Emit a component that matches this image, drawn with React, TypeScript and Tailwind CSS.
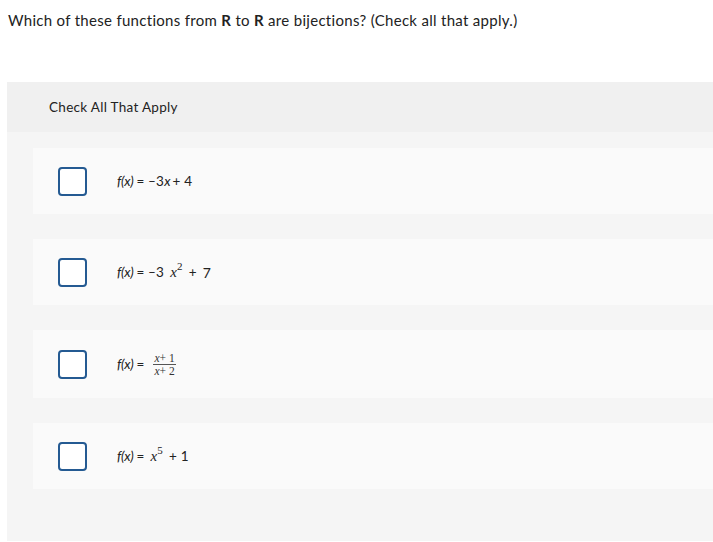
import React from "react";

const sans = { fontFamily: '"Lato", "Open Sans", sans-serif' };

function Box() {
  return <div className="w-[29px] h-[29px] shrink-0 rounded-[4px] border-2 border-[#245a92] bg-white" />;
}

function Fx() {
  return <span className="italic tracking-[-0.3px]">f(x)</span>;
}

function Card({ h, children }: { h: string; children: React.ReactNode }) {
  return (
    <div className={`flex items-center bg-[#fafafa] pl-[25px] ${h}`}>
      <Box />
      <div className="ml-[30px] flex items-center text-[13.5px] tracking-[0.2px] text-[#222]">{children}</div>
    </div>
  );
}

const serif = { fontFamily: '"Liberation Serif", "Times New Roman", serif' };

export default function App() {
  return (
    <div className="bg-white min-h-[542px] w-[713px] overflow-hidden" style={sans}>
      <div className="pl-[8px] pt-[10px] text-[15px] leading-[20px] tracking-[0.3px] text-[#222]">
        Which of these functions from <b>R</b> to <b>R</b> are bijections? (Check all that apply.)
      </div>
      <div className="mt-[52px] ml-[7px] w-[720px] bg-[#f5f5f5] pb-[52px]">
        <div className="flex h-[50px] items-center bg-[#f0f0f0] pl-[42px] text-[13.5px] tracking-[0.3px] text-[#222]">
          Check All That Apply
        </div>
        <div className="flex flex-col gap-[25px] pl-[26px] pt-[16px]">
          <Card h="h-[66px]">
            <Fx />
            <span className="ml-[3px]">= –3</span>
            <span className="italic">x</span>
            <span className="ml-[2px]">+ 4</span>
          </Card>
          <Card h="h-[66px]">
            <Fx />
            <span className="ml-[3px]">= –3</span>
            <span className="ml-[6px] italic text-[15px]" style={serif}>
              x
            </span>
            <sup className="text-[11px] -top-[6px] relative" style={serif}>2</sup>
            <span className="ml-[6px]">+</span>
            <span className="ml-[6px] text-[14px]">7</span>
          </Card>
          <Card h="h-[68px]">
            <Fx />
            <span className="ml-[3px]">=</span>
            <span className="ml-[9px] inline-flex flex-col items-center text-[11.5px] leading-[12px] tracking-normal text-[#333]" style={serif}>
              <span className="block px-[1px]"><i>x</i>+ 1</span>
              <span className="block h-px w-full bg-[#555]" />
              <span className="block px-[1px]"><i>x</i>+ 2</span>
            </span>
          </Card>
          <Card h="h-[66px]">
            <Fx />
            <span className="ml-[3px]">=</span>
            <span className="ml-[6px] italic text-[15px]" style={serif}>
              x
            </span>
            <sup className="text-[11px] -top-[6px] relative" style={serif}>5</sup>
            <span className="ml-[6px]">+ 1</span>
          </Card>
        </div>
      </div>
    </div>
  );
}
